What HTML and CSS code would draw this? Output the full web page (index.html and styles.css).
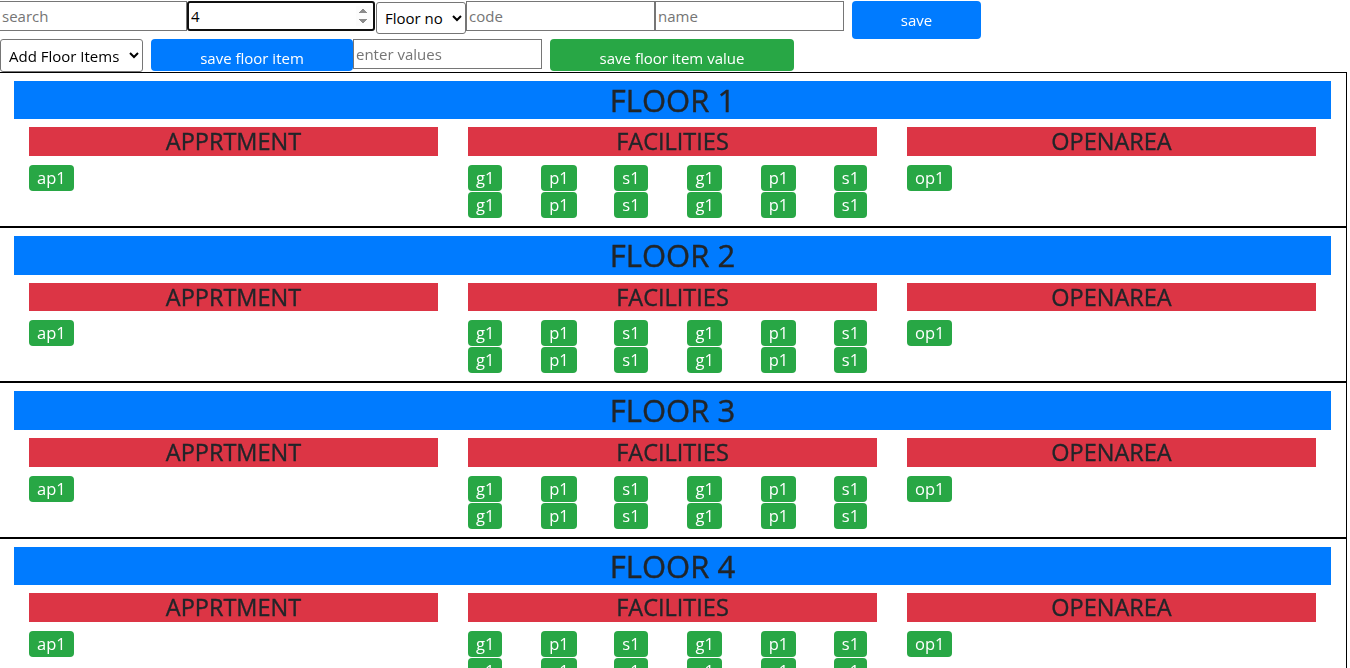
FILE: index.html
```html
<!DOCTYPE html>
<html lang="en">
<head>
<meta charset="utf-8">
<title>Floors</title>
<link rel="stylesheet" href="styles.css">
</head>
<body>
<div class="toolbar">
  <div class="tb-row">
    <input class="field search" type="text" placeholder="search">
    <input class="field num" type="number" value="4" autofocus>
    <select class="sel floor-sel"><option>Floor no</option></select>
    <input class="field code" type="text" placeholder="code">
    <input class="field name" type="text" placeholder="name">
    <button class="btn btn-blue save">save</button>
  </div>
  <div class="tb-row">
    <select class="sel items-sel"><option>Add Floor Items</option></select>
    <button class="btn btn-blue sfi">save floor item</button>
    <input class="field vals" type="text" placeholder="enter values">
    <button class="btn btn-green sfiv">save floor item value</button>
  </div>
</div>

<div class="floors">
  <section class="floor">
    <h2 class="floor-title">FLOOR 1</h2>
    <div class="cols">
      <div class="col">
        <h4 class="col-title">APPRTMENT</h4>
        <div class="badges"><span class="badge">ap1</span></div>
      </div>
      <div class="col">
        <h4 class="col-title">FACILITIES</h4>
        <div class="badges fac-grid">
          <span class="badge">g1</span><span class="badge">p1</span><span class="badge">s1</span><span class="badge">g1</span><span class="badge">p1</span><span class="badge">s1</span>
          <span class="badge">g1</span><span class="badge">p1</span><span class="badge">s1</span><span class="badge">g1</span><span class="badge">p1</span><span class="badge">s1</span>
        </div>
      </div>
      <div class="col">
        <h4 class="col-title">OPENAREA</h4>
        <div class="badges"><span class="badge">op1</span></div>
      </div>
    </div>
  </section>
  <section class="floor">
    <h2 class="floor-title">FLOOR 2</h2>
    <div class="cols">
      <div class="col">
        <h4 class="col-title">APPRTMENT</h4>
        <div class="badges"><span class="badge">ap1</span></div>
      </div>
      <div class="col">
        <h4 class="col-title">FACILITIES</h4>
        <div class="badges fac-grid">
          <span class="badge">g1</span><span class="badge">p1</span><span class="badge">s1</span><span class="badge">g1</span><span class="badge">p1</span><span class="badge">s1</span>
          <span class="badge">g1</span><span class="badge">p1</span><span class="badge">s1</span><span class="badge">g1</span><span class="badge">p1</span><span class="badge">s1</span>
        </div>
      </div>
      <div class="col">
        <h4 class="col-title">OPENAREA</h4>
        <div class="badges"><span class="badge">op1</span></div>
      </div>
    </div>
  </section>
  <section class="floor">
    <h2 class="floor-title">FLOOR 3</h2>
    <div class="cols">
      <div class="col">
        <h4 class="col-title">APPRTMENT</h4>
        <div class="badges"><span class="badge">ap1</span></div>
      </div>
      <div class="col">
        <h4 class="col-title">FACILITIES</h4>
        <div class="badges fac-grid">
          <span class="badge">g1</span><span class="badge">p1</span><span class="badge">s1</span><span class="badge">g1</span><span class="badge">p1</span><span class="badge">s1</span>
          <span class="badge">g1</span><span class="badge">p1</span><span class="badge">s1</span><span class="badge">g1</span><span class="badge">p1</span><span class="badge">s1</span>
        </div>
      </div>
      <div class="col">
        <h4 class="col-title">OPENAREA</h4>
        <div class="badges"><span class="badge">op1</span></div>
      </div>
    </div>
  </section>
  <section class="floor">
    <h2 class="floor-title">FLOOR 4</h2>
    <div class="cols">
      <div class="col">
        <h4 class="col-title">APPRTMENT</h4>
        <div class="badges"><span class="badge">ap1</span></div>
      </div>
      <div class="col">
        <h4 class="col-title">FACILITIES</h4>
        <div class="badges fac-grid">
          <span class="badge">g1</span><span class="badge">p1</span><span class="badge">s1</span><span class="badge">g1</span><span class="badge">p1</span><span class="badge">s1</span>
          <span class="badge">g1</span><span class="badge">p1</span><span class="badge">s1</span><span class="badge">g1</span><span class="badge">p1</span><span class="badge">s1</span>
        </div>
      </div>
      <div class="col">
        <h4 class="col-title">OPENAREA</h4>
        <div class="badges"><span class="badge">op1</span></div>
      </div>
    </div>
  </section>
</div>
</body>
</html>
```

FILE: styles.css
```css
html, body {
  margin: 0;
  padding: 0;
  overflow: hidden;
  background: #fff;
}

body {
  font-family: "Open Sans", "Noto Sans", sans-serif;
  font-size: 16px;
  line-height: 1.5;
  color: #212529;
}

.tb-row {
  display: flex;
  align-items: flex-start;
}

.field {
  box-sizing: border-box;
  height: 30px;
  margin: 1px 0 0;
  padding: 1px 2px;
  border: 1px solid #767676;
  border-radius: 0;
  font-family: inherit;
  font-size: 15px;
  color: #000;
  background: #fff;
}

.field::placeholder {
  color: #757575;
}

.search {
  width: 188px;
  margin-left: -1px;
}

.num {
  width: 188px;
  border: 2px solid #101010;
  border-radius: 3px;
  outline: none;
}

.code,
.name {
  width: 189px;
}

.vals {
  width: 189px;
  margin-top: 0;
}

.sel {
  box-sizing: border-box;
  font-family: inherit;
  font-size: 15px;
  color: #000;
  background: #fff;
  border: 1px solid #767676;
  border-radius: 3px;
  padding: 0 2px 0 4px;
}

.floor-sel {
  width: 90px;
  height: 32px;
  margin: 2px 0 0 1px;
}

.items-sel {
  width: 143px;
  height: 33px;
}

.btn {
  box-sizing: border-box;
  border: 1px solid transparent;
  border-radius: 4px;
  color: #fff;
  font-family: inherit;
  font-size: 15px;
  padding: 0;
}

.btn-blue {
  background: #007bff;
}

.btn-green {
  background: #28a745;
}

.save {
  width: 129px;
  height: 38px;
  margin: 1px 0 0 8px;
}

.sfi {
  width: 202px;
  height: 32px;
  margin-left: 8px;
  padding-top: 5px;
}

.sfiv {
  width: 244px;
  height: 32px;
  margin-left: 8px;
  padding-top: 5px;
}

.floor {
  box-sizing: border-box;
  width: 1347px;
  border: 1px solid #000;
  border-left: 0;
  padding: 8px 15px 8px 14px;
}

.floor-title {
  margin: 0;
  background: #007bff;
  font-size: 31px;
  line-height: 38.4px;
  font-weight: 400;
  -webkit-text-stroke: 0.4px #212529;
  text-align: center;
  color: #212529;
}

.cols {
  display: grid;
  grid-template-columns: repeat(3, 1fr);
  column-gap: 30px;
  padding: 0 15px;
  margin-top: 8px;
}

.col-title {
  margin: 0;
  background: #dc3545;
  font-size: 23.5px;
  line-height: 28.8px;
  font-weight: 400;
  -webkit-text-stroke: 0.35px #212529;
  text-align: center;
  color: #212529;
}

.badges {
  margin-top: 9px;
  display: flex;
  align-items: flex-start;
}

.fac-grid {
  display: grid;
  grid-template-columns: repeat(6, 1fr);
  row-gap: 1px;
  margin-right: -30px;
  justify-items: start;
}

.badge {
  display: inline-block;
  background: #28a745;
  color: #fff;
  font-size: 16.5px;
  line-height: 26px;
  padding: 0 8px;
  border-radius: 4px;
}
```
